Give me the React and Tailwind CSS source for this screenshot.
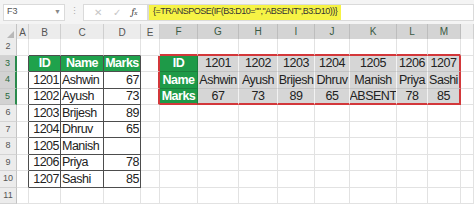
const COLS = ["A", "B", "C", "D", "E", "F", "G", "H", "I", "J", "K", "L", "M", ""];

const ids = ["1201", "1202", "1203", "1204", "1205", "1206", "1207"];
const names = ["Ashwin", "Ayush", "Brijesh", "Dhruv", "Manish", "Priya", "Sashi"];
const marks = ["67", "73", "89", "65", "", "78", "85"];
const tMarks = ["67", "73", "89", "65", "ABSENT", "78", "85"];

const grid = "grid grid-cols-[17px_12px_32px_43px_37px_19px_38px_41px_39px_37px_35px_47px_31px_33px_1fr]";

function cellInfo(row, c) {
  // c = column index into COLS
  const inLeft = row >= 3 && row <= 10 && c >= 1 && c <= 3;
  const inRight = row >= 3 && row <= 5 && c >= 5 && c <= 12;
  let text = "";
  let cls = "border-r border-b border-r-[#e2e2e2] border-b-[#e2e2e2] bg-white";
  let align = "justify-center";

  if (inLeft) {
    if (row === 3) {
      text = ["ID", "Name", "Marks"][c - 1];
      cls = "border-r border-b border-r-[#4d4d4d] border-b-[#4d4d4d] bg-[#1fa24c] text-white font-bold";
    } else {
      const i = row - 4;
      text = [ids[i], names[i], marks[i]][c - 1];
      cls = "border-r border-b border-r-[#4d4d4d] border-b-[#4d4d4d] bg-white text-[#222]";
      align = c === 2 ? "justify-start" : "justify-end";
    }
  } else if (inRight) {
    const lastRow = row === 5;
    const lastCol = c === 12;
    if (c === 5) {
      text = ["ID", "Name", "Marks"][row - 3];
      cls = lastRow
        ? "border-r border-b-2 border-r-[#1a7f3c] border-b-[#d3373a] bg-[#1e9a48] text-white font-bold"
        : "border-r border-b border-r-[#1a7f3c] border-b-[#1a7f3c] bg-[#1e9a48] text-white font-bold";
    } else {
      const i = c - 6;
      text = [ids[i], names[i], tMarks[i]][row - 3];
      if (lastRow && lastCol) cls = "border-r-2 border-b-2 border-r-[#d3373a] border-b-[#d3373a] bg-[#d6d6d6] text-[#222]";
      else if (lastRow) cls = "border-r border-b-2 border-r-[#f2f2f2] border-b-[#d3373a] bg-[#d6d6d6] text-[#222]";
      else if (lastCol) cls = "border-r-2 border-b border-r-[#d3373a] border-b-[#c4c4c4] bg-[#d6d6d6] text-[#222]";
      else cls = "border-r border-b border-r-[#f2f2f2] border-b-[#c4c4c4] bg-[#d6d6d6] text-[#222]";
    }
  } else if (row === 2 && c >= 1 && c <= 3) {
    cls = "border-r border-b border-r-[#e2e2e2] border-b-[#4d4d4d] bg-white";
  } else if (row === 2 && c >= 5 && c <= 12) {
    cls = "border-r border-b-2 border-r-[#e2e2e2] border-b-[#d3373a] bg-white";
  } else if (c === 0 && row >= 3 && row <= 10) {
    cls = "border-r border-b border-r-[#4d4d4d] border-b-[#e2e2e2] bg-white";
  } else if (c === 4 && row >= 3 && row <= 5) {
    cls = "border-r-2 border-b border-r-[#d3373a] border-b-[#e2e2e2] bg-white";
  }
  return { text, cls, align };
}

function RowHead({ n }) {
  const sel = n >= 3 && n <= 5;
  return (
    <div
      className={
        sel
          ? "flex items-center justify-center border-b border-r-2 border-b-[#c8c8c8] border-r-[#2a8a4c] bg-[#d2d2d2] text-[9px] text-[#2a6a3f]"
          : "flex items-center justify-center border-b border-r border-b-[#d4d4d4] border-r-[#c4c4c4] bg-[#ececec] text-[9px] text-[#555]"
      }
    >
      {n}
    </div>
  );
}

function FormulaBar() {
  return (
    <div className="h-[24px] flex items-center bg-[#f4f4f4] pl-[3px] text-[#555]">
      <div className="w-[62px] h-[17px] bg-white border border-[#dadada] flex items-center justify-between px-[3px] text-[9px]">
        <span>F3</span>
        <span className="text-[7px] text-[#888]">▼</span>
      </div>
      <div className="w-[18px] flex justify-center text-[9px] text-[#aaa]">⋮</div>
      <div className="w-[65px] h-[17px] bg-white border border-[#dadada] flex items-center justify-around px-[4px] text-[10px]">
        <span className="text-[#c6c6c6]">✕</span>
        <span className="text-[#c6c6c6]">✓</span>
        <span className="italic font-serif text-[#444] text-[10px]">f<span className="text-[7px]">x</span></span>
      </div>
      <div className="flex-1 h-[17px] bg-white border border-[#dadada] flex items-center">
        <div className="h-full bg-[#f6f345] flex items-center px-[4px] text-[9px] text-[#333] tracking-[-0.5px] whitespace-nowrap">
          {'{=TRANSPOSE(IF(B3:D10="","ABSENT",B3:D10))}'}
        </div>
      </div>
    </div>
  );
}

export default function App() {
  const rows = [2, 3, 4, 5, 6, 7, 8, 9, 10, 11];
  return (
    <div className="w-[474px] h-[204px] overflow-hidden bg-white font-['Liberation_Sans',Arial,sans-serif]">
      <FormulaBar />
      <div className={grid + " h-[15px]"}>
        <div className="flex items-end justify-end pr-[2px] pb-[2px] bg-[#ececec] border-r border-b border-r-[#c4c4c4] border-b-[#c4c4c4]">
          <div className="w-0 h-0 border-l-[7px] border-l-transparent border-b-[7px] border-b-[#b8b8b8]" />
        </div>
        {COLS.map((col, c) => {
          const sel = c >= 5 && c <= 12;
          return (
            <div
              key={c}
              className={
                sel
                  ? "flex items-center justify-center border-r border-b-2 border-r-[#bdbdbd] border-b-[#217346] bg-[#d4d4d4] text-[10px] text-[#3a5a44]"
                  : "flex items-center justify-center border-r border-b border-r-[#cfcfcf] border-b-[#c4c4c4] bg-[#ececec] text-[10px] text-[#555]"
              }
            >
              {col}
            </div>
          );
        })}
      </div>
      {rows.map((r) => (
        <div key={r} className={grid + " h-[16.5px]"}>
          <RowHead n={r} />
          {COLS.map((_, c) => {
            const { text, cls, align } = cellInfo(r, c);
            return (
              <div
                key={c}
                className={cls + " flex items-center px-[1px] overflow-hidden whitespace-nowrap text-[12.5px] tracking-[-0.5px] leading-none " + align}
              >
                {text}
              </div>
            );
          })}
        </div>
      ))}
    </div>
  );
}
